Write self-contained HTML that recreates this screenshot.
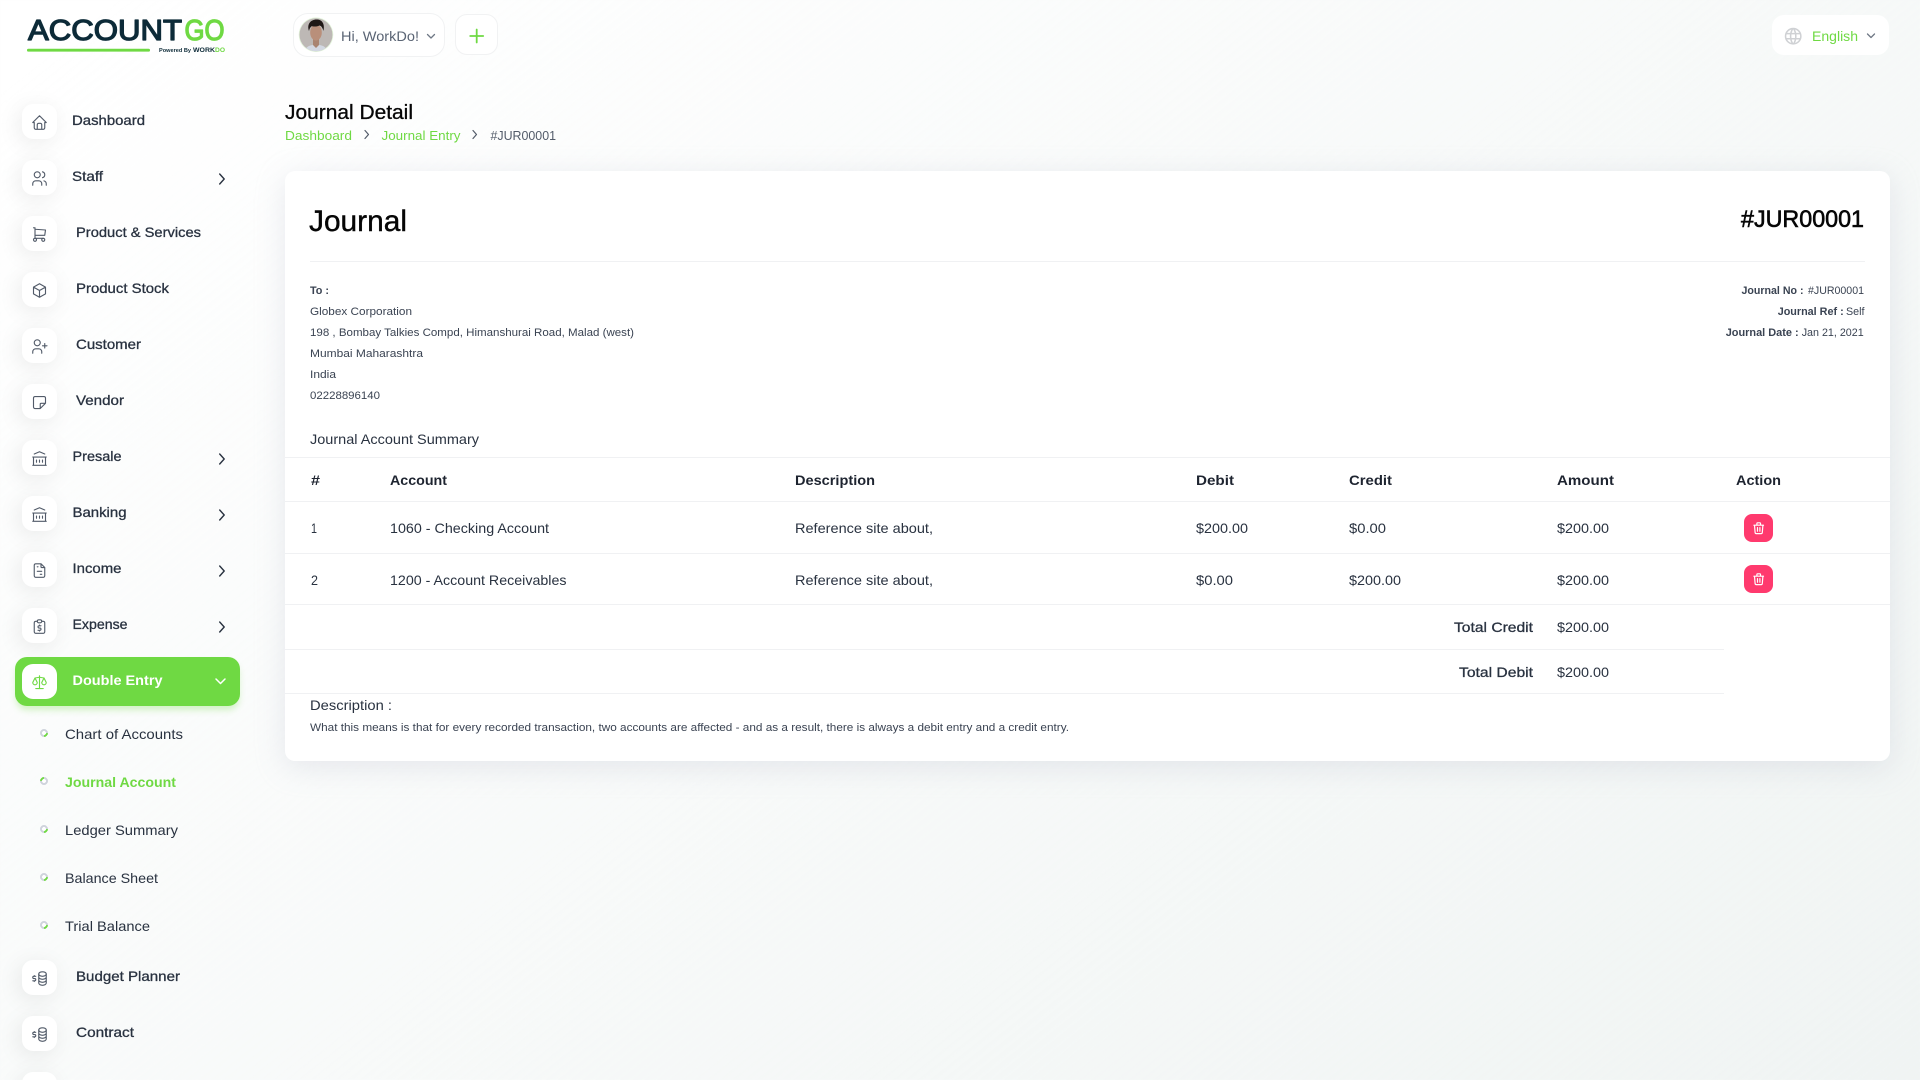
<!DOCTYPE html>
<html lang="en">
<head>
<meta charset="utf-8">
<title>Journal Detail</title>
<style>
html,body{margin:0;padding:0;width:1920px;height:1080px;overflow:hidden}
body{position:relative;font-family:"Liberation Sans",sans-serif;background:linear-gradient(141.55deg,rgba(240,244,243,0) 3.46%,#f0f4f3 99.86%),#fff}
.b{position:absolute;box-sizing:border-box}
.tile{left:22px;width:35px;height:35px;background:#fff;border-radius:11px;box-shadow:-3px 4px 23px rgba(0,0,0,.08)}
.active{left:15px;top:657px;width:225px;height:49px;background:#6fd943;border-radius:12px;box-shadow:0 5px 7px -1px rgba(111,217,67,.3)}
.card{left:285px;top:171px;width:1605px;height:590px;background:#fff;border-radius:10px;box-shadow:0 6px 30px rgba(182,186,203,.3)}
.pill{left:293px;top:13px;width:152px;height:44px;background:#fff;border:1px solid #f1f2f3;border-radius:15px}
.plus{left:455px;top:14px;width:43px;height:41px;background:#fff;border:1px solid #f1f2f3;border-radius:12px}
.lang{left:1772px;top:15px;width:117px;height:40px;background:#fff;border-radius:12px}
.del{left:1744px;width:29px;height:28px;background:#ff3a6e;border-radius:8px}
.ln{height:1px;background:#f0f1f3}
.dot{left:40px;width:8px;height:8px;border-radius:50%;border:2px solid #cfd3dc;background:#fff;transform:rotate(-45deg)}
.dot.n{border-bottom-color:#6fd943}
.dot.a{border-top-color:#6fd943}
svg.o{position:absolute;left:0;top:0;width:1920px;height:1080px}
svg.o text{font-family:"Liberation Sans",sans-serif;font-size:14px;fill:#293240}
.s{stroke:#293240;stroke-width:.3px}
.k{font-weight:700;fill:#1e2430!important}
.sm{font-size:11.2px!important;fill:#3a4352!important}
.g{fill:#6fd943!important}
.i{fill:none;stroke:#525b69;stroke-width:1.5;stroke-linecap:round;stroke-linejoin:round}
.c{fill:none;stroke:#293240;stroke-width:1.4;stroke-linecap:round;stroke-linejoin:round}
</style>
</head>
<body>
<div class="b pill"></div>
<div class="b plus"></div>
<div class="b lang"></div>

<div class="b tile" style="top:104px"></div>
<div class="b tile" style="top:160px"></div>
<div class="b tile" style="top:216px"></div>
<div class="b tile" style="top:272px"></div>
<div class="b tile" style="top:328px"></div>
<div class="b tile" style="top:384px"></div>
<div class="b tile" style="top:440px"></div>
<div class="b tile" style="top:496px"></div>
<div class="b tile" style="top:552px"></div>
<div class="b tile" style="top:608px"></div>
<div class="b active"></div>
<div class="b tile" style="top:664px;box-shadow:none"></div>
<div class="b tile" style="top:960px"></div>
<div class="b tile" style="top:1016px"></div>
<div class="b tile" style="top:1072px"></div>

<div class="b dot n" style="top:729px"></div>
<div class="b dot a" style="top:777px"></div>
<div class="b dot n" style="top:825px"></div>
<div class="b dot n" style="top:873px"></div>
<div class="b dot n" style="top:921px"></div>

<div class="b card"></div>
<div class="b ln" style="left:310px;top:261px;width:1555px"></div>
<div class="b ln" style="left:285px;top:457px;width:1605px"></div>
<div class="b ln" style="left:285px;top:501px;width:1605px"></div>
<div class="b ln" style="left:285px;top:553px;width:1605px"></div>
<div class="b ln" style="left:285px;top:604px;width:1605px"></div>
<div class="b ln" style="left:285px;top:649px;width:1439px"></div>
<div class="b ln" style="left:285px;top:693px;width:1439px"></div>
<div class="b del" style="top:514px"></div>
<div class="b del" style="top:565px"></div>

<svg class="o" viewBox="0 0 1920 1080" xmlns="http://www.w3.org/2000/svg">
<defs>
<g id="home"><path d="M5 12H3l9-9 9 9h-2M5 12v7a2 2 0 0 0 2 2h10a2 2 0 0 0 2-2v-7M9 21v-6a2 2 0 0 1 2-2h2a2 2 0 0 1 2 2v6"/></g>
<g id="users"><circle cx="9" cy="7" r="4"/><path d="M3 21v-2a4 4 0 0 1 4-4h4a4 4 0 0 1 4 4v2M16 3.13a4 4 0 0 1 0 7.75M21 21v-2a4 4 0 0 0-3-3.85"/></g>
<g id="cart"><circle cx="6" cy="19" r="2"/><circle cx="17" cy="19" r="2"/><path d="M17 17H6V3H4M6 5l14 1-1 7H6"/></g>
<g id="box"><path d="M12 3l8 4.5v9L12 21l-8-4.5v-9L12 3M12 12l8-4.5M12 12v9M12 12L4 7.5"/></g>
<g id="userplus"><circle cx="9" cy="7" r="4"/><path d="M3 21v-2a4 4 0 0 1 4-4h4a4 4 0 0 1 4 4v2M16 11h6M19 8v6"/></g>
<g id="note"><path d="M13 20l7-7M13 20v-6a1 1 0 0 1 1-1h6V6a2 2 0 0 0-2-2H6a2 2 0 0 0-2 2v12a2 2 0 0 0 2 2h7"/></g>
<g id="bank"><path d="M3 21h18M3 10h18M5 6l7-3 7 3M4 10v11M20 10v11M8 14v3M12 14v3M16 14v3"/></g>
<g id="invoice"><path d="M14 3v4a1 1 0 0 0 1 1h4M17 21H7a2 2 0 0 1-2-2V5a2 2 0 0 1 2-2h7l5 5v11a2 2 0 0 1-2 2zM9 7h1M9 13h6M13 17h2"/></g>
<g id="money"><path d="M9 5H7a2 2 0 0 0-2 2v12a2 2 0 0 0 2 2h10a2 2 0 0 0 2-2V7a2 2 0 0 0-2-2h-2"/><rect x="9" y="3" width="6" height="4" rx="2"/><path d="M14 11h-2.500a1.500 1.500 0 0 0 0 3h1a1.500 1.500 0 0 1 0 3H10M12 17v1m0-8v1"/></g>
<g id="scale"><path d="M7 20h10M6 6l6-1 6 1M12 3v17M9 12L6 6l-3 6a3 3 0 0 0 6 0M21 12l-3-6-3 6a3 3 0 0 0 6 0"/></g>
<g id="coins"><ellipse cx="16" cy="6" rx="5" ry="3"/><path d="M11 6v4c0 1.657 2.239 3 5 3s5-1.343 5-3V6M11 10v4c0 1.657 2.239 3 5 3s5-1.343 5-3v-4M11 14v4c0 1.657 2.239 3 5 3s5-1.343 5-3v-4M7 9H4.500a1.500 1.500 0 0 0 0 3h1a1.500 1.500 0 0 1 0 3H3M5 15v1m0-8v1"/></g>
<g id="trash"><path d="M4 7h16M10 11v6M14 11v6M5 7l1 12a2 2 0 0 0 2 2h8a2 2 0 0 0 2-2l1-12M9 7V4a1 1 0 0 1 1-1h4a1 1 0 0 1 1 1v3"/></g>
<clipPath id="av"><circle cx="316" cy="34.700" r="16.500"/></clipPath>
</defs>

<!-- logo -->
<text x="28" y="40" textLength="154" lengthAdjust="spacingAndGlyphs" style="font-size:29px;fill:#0d2b38;stroke:#0d2b38;stroke-width:1.300px;stroke-linejoin:round">ACCOUNT</text>
<text x="184.500" y="40" textLength="40" lengthAdjust="spacingAndGlyphs" style="font-size:29px;fill:#6fd943;stroke:#6fd943;stroke-width:1.300px;stroke-linejoin:round">GO</text>
<rect x="27" y="48.800" width="123" height="2.800" rx="1.400" fill="#6fd943"/>
<text x="159" y="52" textLength="32" lengthAdjust="spacingAndGlyphs" style="font-size:5.500px;fill:#0d2b38;font-weight:700">Powered By</text>
<text x="193" y="52" textLength="22" lengthAdjust="spacingAndGlyphs" style="font-size:6px;fill:#0d2b38;font-weight:700">WORK</text>
<text x="215" y="52" textLength="10" lengthAdjust="spacingAndGlyphs" style="font-size:6px;font-weight:700" class="g">DO</text>

<!-- avatar -->
<circle cx="316" cy="34.700" r="17.300" fill="#e4f5dc"/>
<g clip-path="url(#av)">
<rect x="298" y="17" width="36" height="36" fill="#bdb8b5"/>
<path d="M304 54c.5-7 5-9 12-9.500 7 .5 11.500 2.500 12 9.500z" fill="#d3d8e2"/>
<path d="M313 38h6v7l-3 3-3-3z" fill="#a98471"/>
<ellipse cx="316" cy="32.500" rx="5.800" ry="8" fill="#b98f7a"/>
<path d="M309 31c-2.500-7 2-11.500 7.500-11.500 5.500 0 8.500 4 7 11.500-.8-3-2-5-4-5.500-3 1.500-6.500 1-8 .8-1.200 1-2 2.500-2.500 4.700z" fill="#1f1815"/>
</g>

<!-- top bar -->
<text x="341" y="41" textLength="78" lengthAdjust="spacingAndGlyphs" style="fill:#5a6474">Hi, WorkDo!</text>
<path d="M427.500 34.500l3.500 3.500 3.500-3.500" fill="none" stroke="#6f7885" stroke-width="1.300" stroke-linecap="round" stroke-linejoin="round"/>
<path d="M476.700 29.500v13M470.200 36h13" stroke="#6fd943" stroke-width="1.800" stroke-linecap="round" fill="none"/>
<g transform="translate(1783 26) scale(.85)" fill="none" stroke="#cfd1d4" stroke-width="1.800"><circle cx="12" cy="12" r="9"/><path d="M3.600 9h16.800M3.600 15h16.800M11.500 3a17 17 0 0 0 0 18M12.500 3a17 17 0 0 1 0 18"/></g>
<text x="1812" y="41" textLength="46" lengthAdjust="spacingAndGlyphs" class="g">English</text>
<path d="M1867.500 34l3.500 3.500 3.500-3.500" fill="none" stroke="#6f7885" stroke-width="1.300" stroke-linecap="round" stroke-linejoin="round"/>

<!-- sidebar icons -->
<g class="i">
<use href="#home" transform="translate(30.500 113.500) scale(.75)"/>
<use href="#users" transform="translate(30.500 169.500) scale(.75)"/>
<use href="#cart" transform="translate(30.500 225.500) scale(.75)"/>
<use href="#box" transform="translate(30.500 281.500) scale(.75)"/>
<use href="#userplus" transform="translate(30.500 337.500) scale(.75)"/>
<use href="#note" transform="translate(30.500 393.500) scale(.75)"/>
<use href="#bank" transform="translate(30.500 449.500) scale(.75)"/>
<use href="#bank" transform="translate(30.500 505.500) scale(.75)"/>
<use href="#invoice" transform="translate(30.500 561.500) scale(.75)"/>
<use href="#money" transform="translate(30.500 617.500) scale(.75)"/>
<use href="#coins" transform="translate(30.500 969.500) scale(.75)"/>
<use href="#coins" transform="translate(30.500 1025.500) scale(.75)"/>
</g>
<use href="#scale" class="i" style="stroke:#6fd943" transform="translate(30.500 673.500) scale(.75)"/>

<!-- sidebar labels -->
<g class="s">
<text x="72" y="125" textLength="73" lengthAdjust="spacingAndGlyphs" class="s">Dashboard</text>
<text x="72" y="181" textLength="31" lengthAdjust="spacingAndGlyphs" class="s">Staff</text>
<text x="76" y="237" textLength="125" lengthAdjust="spacingAndGlyphs" class="s">Product &amp; Services</text>
<text x="76" y="293" textLength="93" lengthAdjust="spacingAndGlyphs" class="s">Product Stock</text>
<text x="76" y="349" textLength="65" lengthAdjust="spacingAndGlyphs" class="s">Customer</text>
<text x="76" y="405" textLength="48" lengthAdjust="spacingAndGlyphs" class="s">Vendor</text>
<text x="72.500" y="461" textLength="49" lengthAdjust="spacingAndGlyphs" class="s">Presale</text>
<text x="72.500" y="517" textLength="54" lengthAdjust="spacingAndGlyphs" class="s">Banking</text>
<text x="72.500" y="573" textLength="49" lengthAdjust="spacingAndGlyphs" class="s">Income</text>
<text x="72.500" y="629" textLength="55" lengthAdjust="spacingAndGlyphs" class="s">Expense</text>
<text x="76" y="981" textLength="104" lengthAdjust="spacingAndGlyphs" class="s">Budget Planner</text>
<text x="76" y="1037" textLength="58" lengthAdjust="spacingAndGlyphs" class="s">Contract</text>
</g>
<text x="72.500" y="685" textLength="90" lengthAdjust="spacingAndGlyphs" style="fill:#fff;font-weight:700">Double Entry</text>
<text x="65" y="739" textLength="118" lengthAdjust="spacingAndGlyphs">Chart of Accounts</text>
<text x="65" y="787" textLength="111" lengthAdjust="spacingAndGlyphs" class="g" style="font-weight:700">Journal Account</text>
<text x="65" y="835" textLength="113" lengthAdjust="spacingAndGlyphs">Ledger Summary</text>
<text x="65" y="883" textLength="93" lengthAdjust="spacingAndGlyphs">Balance Sheet</text>
<text x="65" y="931" textLength="85" lengthAdjust="spacingAndGlyphs">Trial Balance</text>

<!-- sidebar chevrons -->
<g class="c">
<path d="M219.700 174l4.500 5-4.500 5"/>
<path d="M219.700 454l4.500 5-4.500 5"/>
<path d="M219.700 510l4.500 5-4.500 5"/>
<path d="M219.700 566l4.500 5-4.500 5"/>
<path d="M219.700 622l4.500 5-4.500 5"/>
</g>
<path d="M216 679l4.500 4.500 4.500-4.500" fill="none" stroke="#fff" stroke-width="1.500" stroke-linecap="round" stroke-linejoin="round"/>

<!-- page header -->
<text x="285" y="119" textLength="128" lengthAdjust="spacingAndGlyphs" style="font-size:20px;fill:#060606;stroke:#060606;stroke-width:.3px">Journal Detail</text>
<text x="285" y="140" textLength="67" lengthAdjust="spacingAndGlyphs" class="g" style="font-size:13px">Dashboard</text>
<path d="M365 130.500l3.500 4-3.500 4" fill="none" stroke="#525b69" stroke-width="1.200" stroke-linecap="round" stroke-linejoin="round"/>
<text x="381.500" y="140" textLength="79" lengthAdjust="spacingAndGlyphs" class="g" style="font-size:13px">Journal Entry</text>
<path d="M473 130.500l3.500 4-3.500 4" fill="none" stroke="#525b69" stroke-width="1.200" stroke-linecap="round" stroke-linejoin="round"/>
<text x="490.500" y="140" textLength="65.500" lengthAdjust="spacingAndGlyphs" style="font-size:13px;fill:#525b69">#JUR00001</text>

<!-- card head -->
<text x="309" y="231" textLength="98" lengthAdjust="spacingAndGlyphs" style="font-size:30px;fill:#060606;stroke:#060606;stroke-width:.4px">Journal</text>
<text x="1741" y="227" textLength="123" lengthAdjust="spacingAndGlyphs" style="font-size:24px;fill:#060606;stroke:#060606;stroke-width:.6px">#JUR00001</text>

<!-- address -->
<text x="310" y="294" textLength="19" lengthAdjust="spacingAndGlyphs" class="sm" style="font-weight:700">To :</text>
<text x="310" y="315" textLength="102" lengthAdjust="spacingAndGlyphs" class="sm">Globex Corporation</text>
<text x="310" y="336" textLength="324" lengthAdjust="spacingAndGlyphs" class="sm">198 , Bombay Talkies Compd, Himanshurai Road, Malad (west)</text>
<text x="310" y="357" textLength="113" lengthAdjust="spacingAndGlyphs" class="sm">Mumbai Maharashtra</text>
<text x="310" y="378" textLength="26" lengthAdjust="spacingAndGlyphs" class="sm">India</text>
<text x="310" y="399" textLength="70" lengthAdjust="spacingAndGlyphs" class="sm">02228896140</text>

<text x="1741.500" y="294" textLength="62" lengthAdjust="spacingAndGlyphs" class="sm" style="font-weight:700">Journal No :</text>
<text x="1808" y="294" textLength="56" lengthAdjust="spacingAndGlyphs" class="sm">#JUR00001</text>
<text x="1777.700" y="315" textLength="66" lengthAdjust="spacingAndGlyphs" class="sm" style="font-weight:700">Journal Ref :</text>
<text x="1846" y="315" textLength="18.500" lengthAdjust="spacingAndGlyphs" class="sm">Self</text>
<text x="1725.700" y="336" textLength="73" lengthAdjust="spacingAndGlyphs" class="sm" style="font-weight:700">Journal Date :</text>
<text x="1801.700" y="336" textLength="62" lengthAdjust="spacingAndGlyphs" class="sm">Jan 21, 2021</text>

<text x="310" y="444" textLength="169" lengthAdjust="spacingAndGlyphs">Journal Account Summary</text>

<!-- table -->
<text x="311" y="485" textLength="9" lengthAdjust="spacingAndGlyphs" class="k">#</text>
<text x="390" y="485" textLength="57" lengthAdjust="spacingAndGlyphs" class="k">Account</text>
<text x="795" y="485" textLength="80" lengthAdjust="spacingAndGlyphs" class="k">Description</text>
<text x="1196" y="485" textLength="38" lengthAdjust="spacingAndGlyphs" class="k">Debit</text>
<text x="1349" y="485" textLength="43" lengthAdjust="spacingAndGlyphs" class="k">Credit</text>
<text x="1557" y="485" textLength="57" lengthAdjust="spacingAndGlyphs" class="k">Amount</text>
<text x="1736" y="485" textLength="45" lengthAdjust="spacingAndGlyphs" class="k">Action</text>

<text x="311" y="533" textLength="6" lengthAdjust="spacingAndGlyphs">1</text>
<text x="390" y="533" textLength="159" lengthAdjust="spacingAndGlyphs">1060 - Checking Account</text>
<text x="795" y="533" textLength="138" lengthAdjust="spacingAndGlyphs">Reference site about,</text>
<text x="1196" y="533" textLength="52" lengthAdjust="spacingAndGlyphs">$200.00</text>
<text x="1349" y="533" textLength="37" lengthAdjust="spacingAndGlyphs">$0.00</text>
<text x="1557" y="533" textLength="52" lengthAdjust="spacingAndGlyphs">$200.00</text>

<text x="311" y="585" textLength="7" lengthAdjust="spacingAndGlyphs">2</text>
<text x="390" y="585" textLength="176.500" lengthAdjust="spacingAndGlyphs">1200 - Account Receivables</text>
<text x="795" y="585" textLength="138" lengthAdjust="spacingAndGlyphs">Reference site about,</text>
<text x="1196" y="585" textLength="37" lengthAdjust="spacingAndGlyphs">$0.00</text>
<text x="1349" y="585" textLength="52" lengthAdjust="spacingAndGlyphs">$200.00</text>
<text x="1557" y="585" textLength="52" lengthAdjust="spacingAndGlyphs">$200.00</text>

<text x="1454" y="632" textLength="79" lengthAdjust="spacingAndGlyphs" class="s">Total Credit</text>
<text x="1557" y="632" textLength="52" lengthAdjust="spacingAndGlyphs">$200.00</text>
<text x="1459" y="677" textLength="74" lengthAdjust="spacingAndGlyphs" class="s">Total Debit</text>
<text x="1557" y="677" textLength="52" lengthAdjust="spacingAndGlyphs">$200.00</text>

<text x="310" y="710" textLength="82" lengthAdjust="spacingAndGlyphs">Description :</text>
<text x="310" y="731" textLength="759" lengthAdjust="spacingAndGlyphs" class="sm">What this means is that for every recorded transaction, two accounts are affected - and as a result, there is always a debit entry and a credit entry.</text>

<!-- delete icons -->
<g fill="none" stroke="#fff" stroke-width="2" stroke-linecap="round" stroke-linejoin="round">
<use href="#trash" transform="translate(1751.500 521) scale(.6)"/>
<use href="#trash" transform="translate(1751.500 572) scale(.6)"/>
</g>
</svg>
</body>
</html>
